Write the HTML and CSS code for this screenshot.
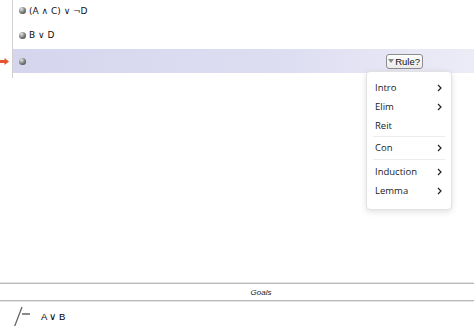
FILE: index.html
```html
<!DOCTYPE html>
<html>
<head>
<meta charset="utf-8">
<link rel="stylesheet" href="styles.css">
</head>
<body>
<div class="page">
  <div class="proof">
    <div class="row r1"><span class="ball"></span><span class="formula">(A ∧ C) ∨ ¬D</span></div>
    <div class="row r2"><span class="ball"></span><span class="formula">B ∨ D</span></div>
    <div class="row r3 active">
      <svg class="arrow" width="9" height="7" viewBox="0 0 9 7"><path d="M0 2 L4.5 2 L4.5 0 L9 3.5 L4.5 7 L4.5 5 L0 5 Z" fill="#e2552e"/></svg>
      <span class="ball"></span>
      <span class="spacer"></span>
      <button class="rule"><span class="tri"></span>Rule?</button>
    </div>
    <div class="tail"></div>
  </div>
  <div class="fill"></div>
  <div class="goalsbar">Goals</div>
  <div class="goal">
    <svg class="turnstile" width="20" height="22" viewBox="0 0 20 22"><path d="M4 23 L12 2 M12 9 L20 9" stroke="#666" stroke-width="1.3" fill="none"/></svg>
    <span class="goaltext">A ∨ B</span>
  </div>

  <div class="menu">
    <div class="item"><span>Intro</span><svg class="chev" width="5" height="8" viewBox="0 0 5 8"><path d="M1 1 L4 4 L1 7" stroke="#222" stroke-width="1.2" fill="none"/></svg></div>
    <div class="item"><span>Elim</span><svg class="chev" width="5" height="8" viewBox="0 0 5 8"><path d="M1 1 L4 4 L1 7" stroke="#222" stroke-width="1.2" fill="none"/></svg></div>
    <div class="item"><span>Reit</span></div>
    <div class="sep sep1"></div>
    <div class="item"><span>Con</span><svg class="chev" width="5" height="8" viewBox="0 0 5 8"><path d="M1 1 L4 4 L1 7" stroke="#222" stroke-width="1.2" fill="none"/></svg></div>
    <div class="sep"></div>
    <div class="item"><span>Induction</span><svg class="chev" width="5" height="8" viewBox="0 0 5 8"><path d="M1 1 L4 4 L1 7" stroke="#222" stroke-width="1.2" fill="none"/></svg></div>
    <div class="item"><span>Lemma</span><svg class="chev" width="5" height="8" viewBox="0 0 5 8"><path d="M1 1 L4 4 L1 7" stroke="#222" stroke-width="1.2" fill="none"/></svg></div>
  </div>
</div>
</body>
</html>
```
FILE: styles.css
```css
html, body {
  margin: 0;
  padding: 0;
  background: #fff;
}
.page {
  position: relative;
  width: 474px;
  height: 326px;
  overflow: hidden;
  display: flex;
  flex-direction: column;
  font-family: "DejaVu Sans", "Liberation Sans", sans-serif;
  color: #111;
}
.proof {
  margin-left: 12px;
  border-left: 1px solid #d0d0d0;
  display: flex;
  flex-direction: column;
}
.row {
  position: relative;
  display: flex;
  align-items: center;
  padding-left: 6px;
  font-size: 9px;
}
.r1 { height: 21px; }
.r2 { height: 28px; }
.r3 { height: 24px; }
.active {
  background: linear-gradient(to right, #d5d5ee 0%, #dedef2 60%, #ececf7 100%);
}
.tail { height: 5px; }
.ball {
  width: 7px;
  height: 7px;
  border-radius: 50%;
  background: radial-gradient(circle at 35% 30%, #e6e6e6 0%, #8a8a8a 45%, #2a2a2a 100%);
  margin-right: 3px;
  flex: none;
}
.arrow {
  position: absolute;
  left: -13px;
  top: 9px;
}
.spacer { flex: 1; }
.rule {
  margin-right: 51px;
  height: 15px;
  padding: 0 2px 0 1px;
  border: 1px solid #8d8d8d;
  border-radius: 3px;
  background: linear-gradient(#fdfdfd, #ececec);
  font-family: "Liberation Sans", sans-serif;
  font-size: 9.5px;
  color: #111;
  display: flex;
  align-items: center;
  gap: 1px;
}
.tri {
  width: 0;
  height: 0;
  border-left: 3px solid transparent;
  border-right: 3px solid transparent;
  border-top: 4px solid #888;
}
.fill { flex: 1; }
.goalsbar {
  height: 16px;
  border-top: 1px solid #b9b9b9;
  border-bottom: 1px solid #b9b9b9;
  box-shadow: 0 1px 0 #e6e6e6, 0 -1px 0 #e6e6e6;
  display: flex;
  align-items: center;
  justify-content: center;
  padding-left: 48px;
  font-family: "Liberation Sans", sans-serif;
  font-style: italic;
  font-size: 8px;
  color: #222;
}
.goal {
  height: 25px;
  display: flex;
  align-items: flex-start;
  padding-left: 10px;
}
.turnstile {
  flex: none;
  margin-top: 4px;
  overflow: visible;
}
.goaltext {
  margin-left: 11px;
  font-family: "Liberation Sans", sans-serif;
  font-size: 9.5px;
  color: #000;
  margin-top: 10px;
}
.menu {
  position: absolute;
  left: 366px;
  top: 71px;
  width: 86px;
  box-sizing: border-box;
  padding: 6px 0 9px;
  background: #fff;
  border: 1px solid #e2e2e2;
  border-radius: 4px;
  box-shadow: 0 2px 6px rgba(0,0,0,0.12);
  font-family: "Open Sans", "Liberation Sans", sans-serif;
  font-size: 9.5px;
  color: #1a1a1a;
}
.item {
  height: 19px;
  display: flex;
  align-items: center;
  justify-content: space-between;
  padding: 0 9px 0 8px;
}
.chev { flex: none; }
.sep {
  height: 1px;
  background: #ececec;
  margin: 2px 6px;
}
.sep1 {
  margin: 1px 6px;
}
```
